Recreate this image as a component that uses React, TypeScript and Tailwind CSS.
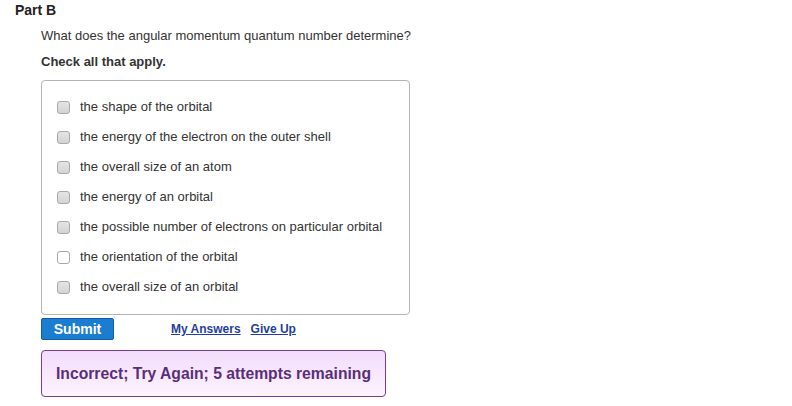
const OPTIONS = [
  { label: "the shape of the orbital", filled: true },
  { label: "the energy of the electron on the outer shell", filled: true },
  { label: "the overall size of an atom", filled: true },
  { label: "the energy of an orbital", filled: true },
  { label: "the possible number of electrons on particular orbital", filled: true },
  { label: "the orientation of the orbital", filled: false },
  { label: "the overall size of an orbital", filled: true },
];

export default function App() {
  return (
    <div className="h-[406px] w-[792px] bg-white text-[#333] font-['Liberation_Sans',Arial,sans-serif]">
      <h2 className="pl-[15px] pt-[2px] text-[14px] font-bold leading-[17px] text-[#222]">Part B</h2>

      <div className="pl-[41px]">
        <p className="mt-[9px] text-[13px] leading-[16px]">
          What does the angular momentum quantum number determine?
        </p>
        <p className="mt-[10px] text-[13px] font-bold leading-[16px]">Check all that apply.</p>

        {/* Options */}
        <div className="mt-[10px] w-[369px] rounded-[4px] border border-[#b4b4b4] px-[15px] pt-[11px] pb-[12px]">
          {OPTIONS.map((opt) => (
            <label key={opt.label} className="flex h-[30px] items-center gap-[10px] text-[13px]">
              <span
                className={`h-[13px] w-[13px] rounded-[3px] border ${
                  opt.filled
                    ? "border-[#a9a9a9] bg-gradient-to-b from-[#e4e4e4] to-[#d4d4d4]"
                    : "border-[#a9a9a9] bg-white"
                }`}
              />
              <span>{opt.label}</span>
            </label>
          ))}
        </div>

        {/* Actions */}
        <div className="mt-[3px] flex items-center">
          <button className="h-[22px] w-[73px] rounded-[2px] border border-[#0f5fa8] bg-[#1a7dd0] text-[14px] font-bold leading-none text-white">
            Submit
          </button>
          <a className="ml-[57px] text-[12px] font-bold text-[#1f3f9a] underline">My Answers</a>
          <a className="ml-[10px] text-[12px] font-bold text-[#1f3f9a] underline">Give Up</a>
        </div>

        {/* Feedback */}
        <div className="mt-[10px] flex h-[47px] w-[345px] items-center rounded-[4px] border border-[#7a3d94] bg-gradient-to-b from-[#f2dcfb] to-[#fdf3ff] pl-[14px] text-[15.7px] font-bold text-[#5a2f78]">
          Incorrect; Try Again; 5 attempts remaining
        </div>
      </div>
    </div>
  );
}
